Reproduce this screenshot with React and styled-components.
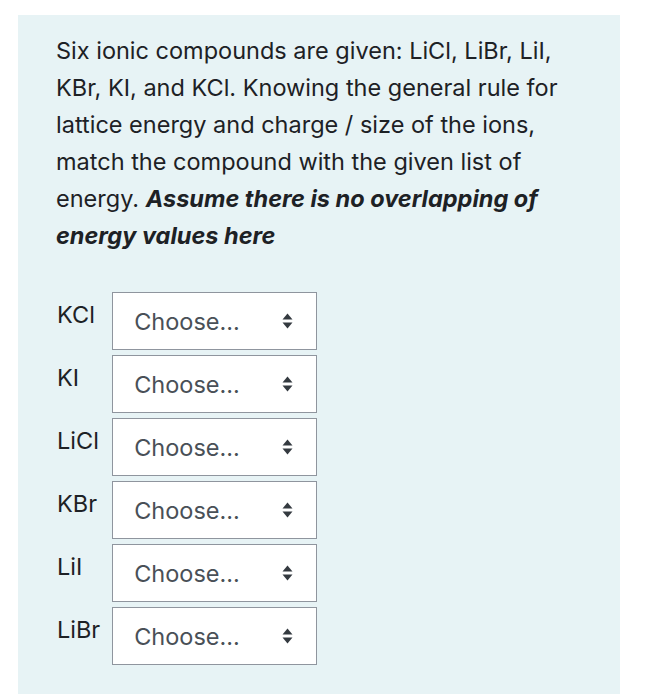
import React from "react";
import styled, { createGlobalStyle } from "styled-components";

const Global = createGlobalStyle`
  html, body { margin: 0; padding: 0; background: #ffffff; }
  body { font-family: Inter, "Noto Sans", Roboto, sans-serif; color: #1d2125; }
`;

const Page = styled.div`
  padding: 15px 25px 6px 18px;
`;

const Panel = styled.div`
  background: #e7f3f5;
  padding: 17px 38px 29px 38px;
  height: 679px;
  box-sizing: border-box;
`;

const Question = styled.p`
  margin: 0 0 38px 0;
  max-width: 505px;
  font-size: 23.5px;
  line-height: 37px;
  color: #1d2125;
`;

const Emph = styled.b`
  font-style: italic;
  font-weight: 700;
`;

const Table = styled.div`
  display: grid;
  grid-template-columns: max-content max-content;
  column-gap: 12px;
  row-gap: 5px;
`;

const Label = styled.div`
  font-size: 23.5px;
  line-height: 28px;
  padding-top: 9px;
  padding-left: 1px;
  color: #1d2125;
`;

const Select = styled.div`
  width: 205px;
  height: 58px;
  box-sizing: border-box;
  border: 1.5px solid #8f959e;
  background: #ffffff;
  display: flex;
  align-items: center;
  justify-content: space-between;
  padding: 0 23px 0 21px;
  font-size: 23.5px;
  color: #495057;
`;

const Arrows = styled.svg`
  width: 11px;
  height: 16px;
  flex: none;
`;

const items = ["KCl", "KI", "LiCl", "KBr", "LiI", "LiBr"];

export default function App() {
  return (
    <>
      <Global />
      <Page>
        <Panel>
          <Question>
            Six ionic compounds are given: LiCl, LiBr, LiI, KBr, KI, and KCl.
            Knowing the general rule for lattice energy and charge / size of
            the ions, match the compound with the given list of energy.{" "}
            <Emph>Assume there is no overlapping of energy values here</Emph>
          </Question>
          <Table>
            {items.map((it) => (
              <React.Fragment key={it}>
                <Label>{it}</Label>
                <Select>
                  <span>Choose...</span>
                  <Arrows viewBox="0 0 11 16">
                    <path d="M5.5 0.5 L10.5 6.5 L0.5 6.5 Z" fill="#343a40" />
                    <path d="M5.5 15.5 L10.5 9.5 L0.5 9.5 Z" fill="#343a40" />
                  </Arrows>
                </Select>
              </React.Fragment>
            ))}
          </Table>
        </Panel>
      </Page>
    </>
  );
}
